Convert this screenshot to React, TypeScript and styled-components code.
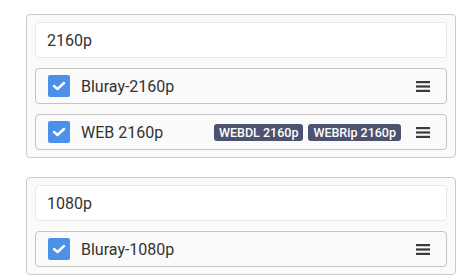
import React from 'react';
import styled, { createGlobalStyle } from 'styled-components';

const GlobalStyle = createGlobalStyle`
  body {
    margin: 0;
    background: #ffffff;
    font-family: Roboto, "Liberation Sans", sans-serif;
    color: #515253;
  }
`;

const Page = styled.div`
  display: flex;
  flex-direction: column;
  gap: 19px;
  padding: 14px 0 0 26px;
  width: 430px;
`;

const Group = styled.div`
  display: flex;
  flex-direction: column;
  gap: 10px;
  padding: 7px 8px;
  border: 1px solid #c9c9c9;
  border-radius: 4px;
  background: #fafafa;
`;

const NameInput = styled.div`
  display: flex;
  align-items: center;
  height: 34px;
  padding: 0 11px;
  border: 1px solid #e8e8e8;
  border-radius: 4px;
  background: #ffffff;
  font-size: 16px;
  color: #333333;
`;

const Row = styled.div`
  display: flex;
  align-items: center;
  height: 34px;
  padding: 0 16px 0 12px;
  border: 1px solid #c4c4c4;
  border-radius: 4px;
  background: #fafafa;
`;

const Check = styled.span`
  display: flex;
  align-items: center;
  justify-content: center;
  width: 22px;
  height: 22px;
  border-radius: 2px;
  background: #4b91e8;
  flex-shrink: 0;
`;

const Label = styled.span`
  margin-left: 11px;
  font-size: 16px;
  color: #333333;
  flex: 1;
`;

const Tags = styled.div`
  display: flex;
  gap: 5px;
  margin-right: 15px;
`;

const Tag = styled.span`
  display: inline-flex;
  align-items: center;
  height: 17px;
  padding: 0 5px;
  border-radius: 3px;
  background: #4c5270;
  color: #ffffff;
  font-size: 12.5px;
  font-weight: 500;
`;

const Handle = styled.svg`
  width: 14px;
  height: 11px;
  flex-shrink: 0;
`;

const CheckMark = () => (
  <svg width="14" height="10" viewBox="0 0 14 10">
    <path d="M2 5 L5.5 8 L12 2" fill="none" stroke="#fff" strokeWidth="2.4" strokeLinecap="round" strokeLinejoin="round" />
  </svg>
);

const DragHandle = () => (
  <Handle viewBox="0 0 14 11">
    <rect x="0" y="0" width="14" height="2.2" fill="#3a3a3a" />
    <rect x="0" y="4.4" width="14" height="2.2" fill="#3a3a3a" />
    <rect x="0" y="8.8" width="14" height="2.2" fill="#3a3a3a" />
  </Handle>
);

interface Item {
  name: string;
  tags?: string[];
}

const groups: { name: string; items: Item[] }[] = [
  {
    name: '2160p',
    items: [
      { name: 'Bluray-2160p' },
      { name: 'WEB 2160p', tags: ['WEBDL 2160p', 'WEBRip 2160p'] },
    ],
  },
  {
    name: '1080p',
    items: [{ name: 'Bluray-1080p' }],
  },
];

const App: React.FC = () => {
  return (
    <>
      <GlobalStyle />
      <Page>
        {groups.map((g) => (
          <Group key={g.name}>
            <NameInput>{g.name}</NameInput>
            {g.items.map((item) => (
              <Row key={item.name}>
                <Check>
                  <CheckMark />
                </Check>
                <Label>{item.name}</Label>
                {item.tags && (
                  <Tags>
                    {item.tags.map((t) => (
                      <Tag key={t}>{t}</Tag>
                    ))}
                  </Tags>
                )}
                <DragHandle />
              </Row>
            ))}
          </Group>
        ))}
      </Page>
    </>
  );
};

export default App;
